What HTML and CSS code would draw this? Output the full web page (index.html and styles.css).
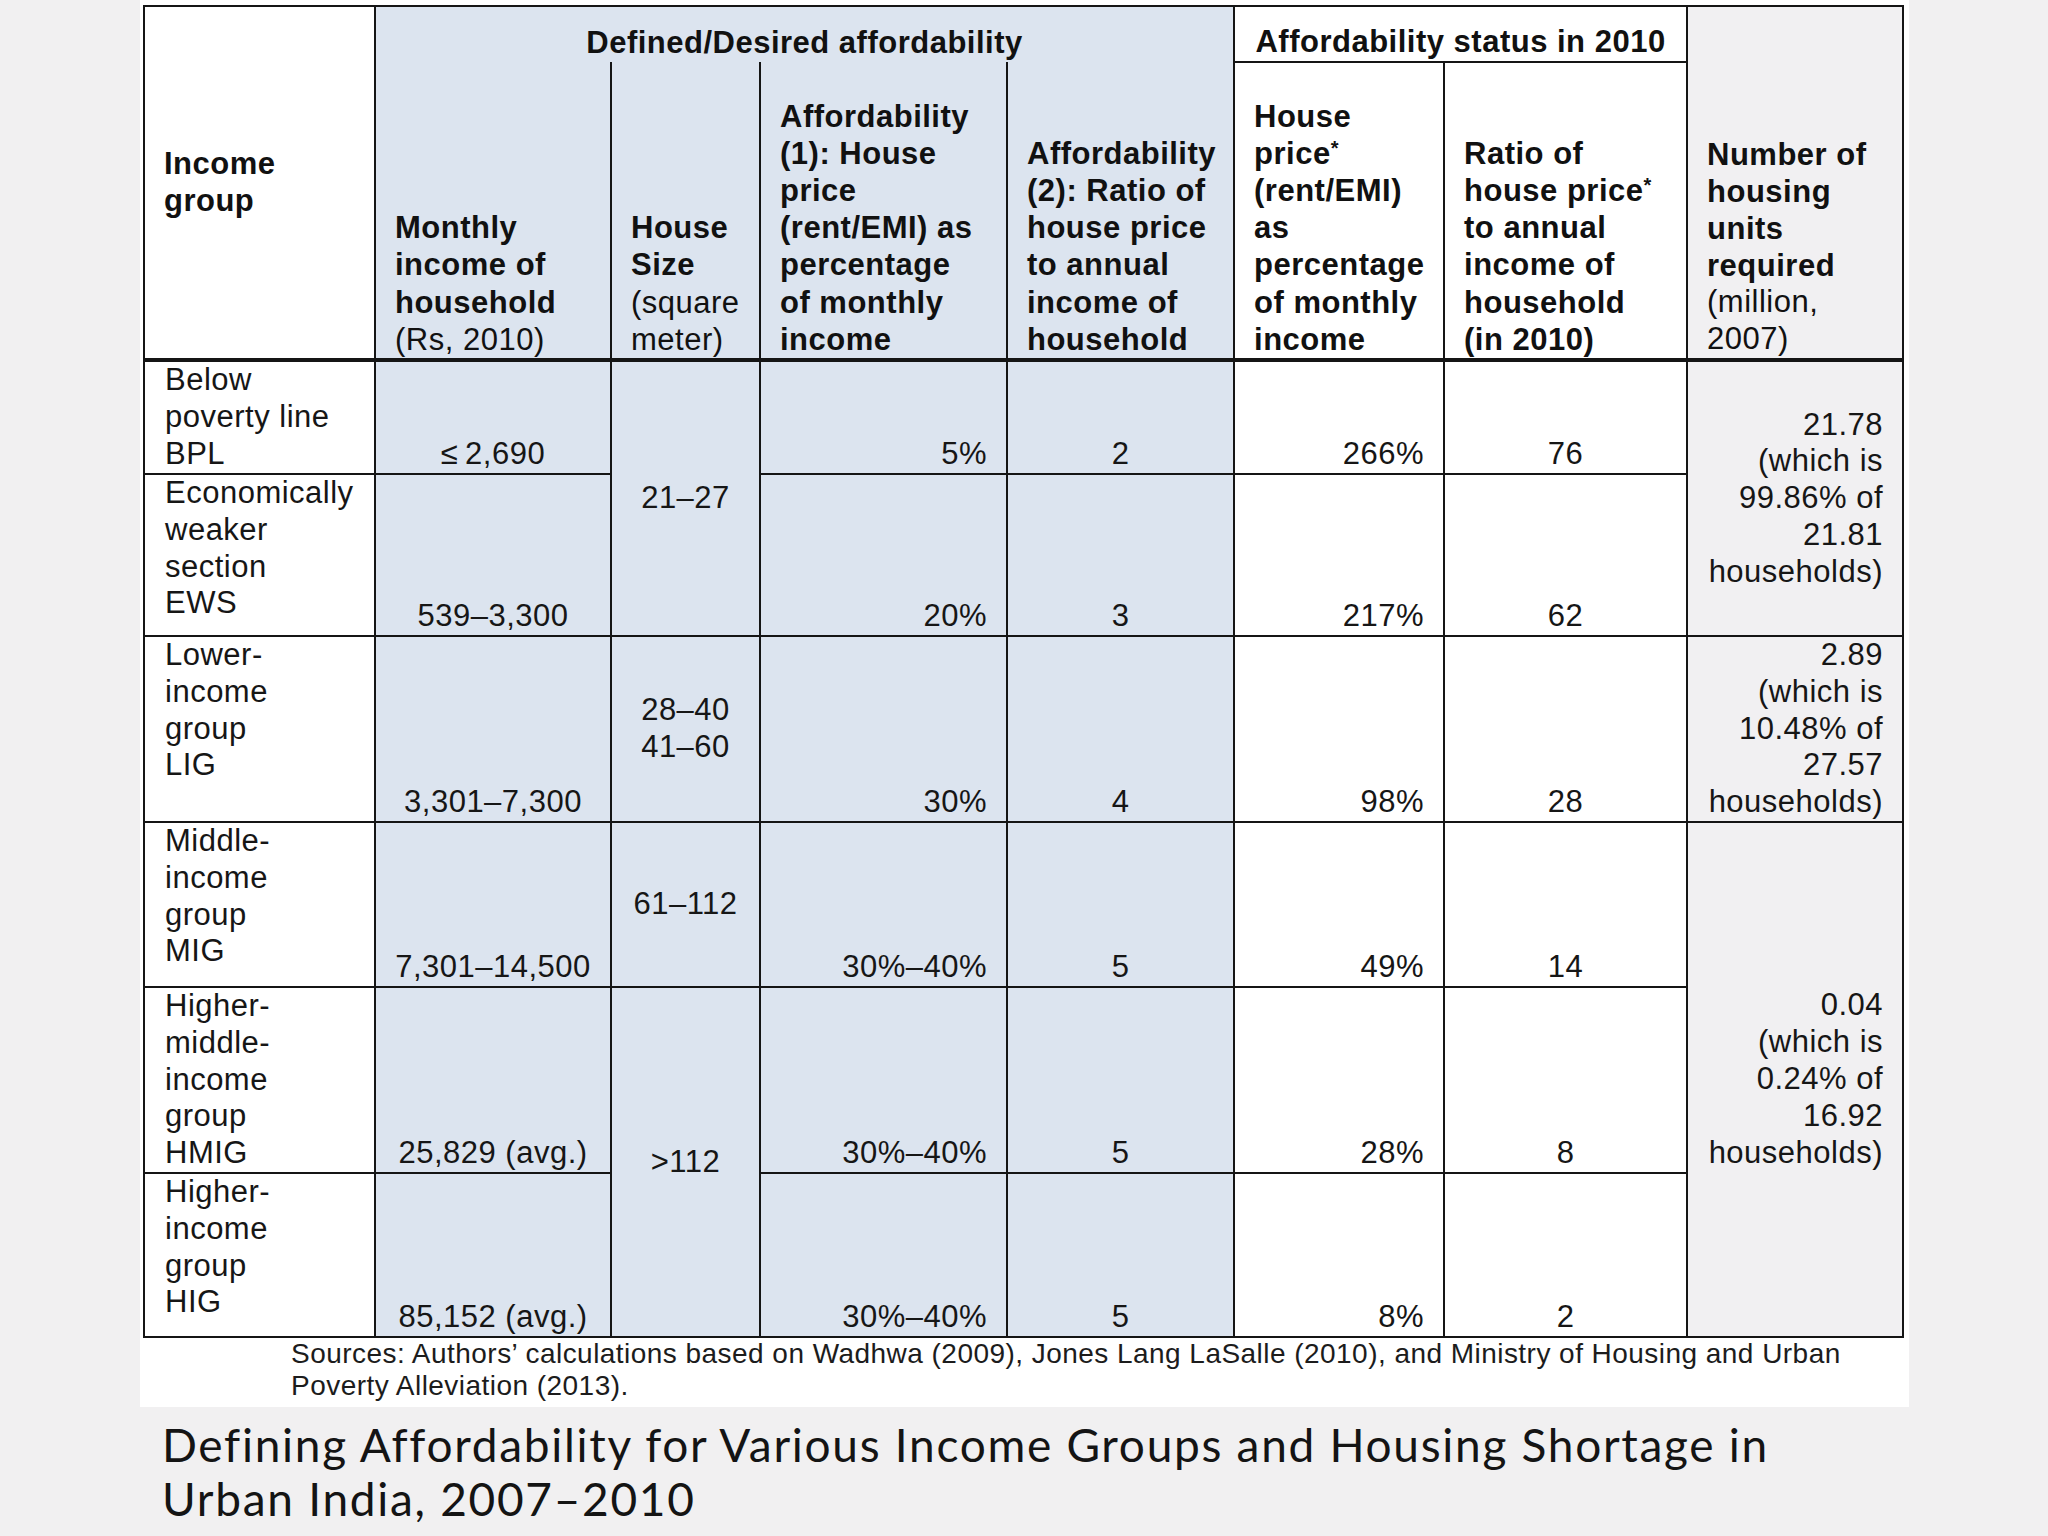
FILE: index.html
```html
<!DOCTYPE html>
<html lang="en">
<head>
    <meta charset="UTF-8">
    <title>Defining Affordability for Various Income Groups</title>
    <link rel="stylesheet" href="styles.css">
</head>
<body>
    <div class="slide">
        <div class="panel">
            <table class="afford">
                <colgroup>
                    <col class="c1"><col class="c2"><col class="c3"><col class="c4">
                    <col class="c5"><col class="c6"><col class="c7"><col class="c8">
                </colgroup>
                <thead>
                    <tr class="h1">
                        <th rowspan="2" class="group-head">Income<br>group</th>
                        <th colspan="4" class="blue center no-bottom">Defined/Desired affordability</th>
                        <th colspan="2" class="center">Affordability status in 2010</th>
                        <th rowspan="2" class="gray">Number of<br>housing<br>units<br>required<br><span class="light">(million,<br>2007)</span></th>
                    </tr>
                    <tr class="h2">
                        <th class="blue no-top">Monthly<br>income of<br>household<br><span class="light">(Rs, 2010)</span></th>
                        <th class="blue no-top">House<br>Size<br><span class="light">(square<br>meter)</span></th>
                        <th class="blue no-top">Affordability<br>(1): House<br>price<br>(rent/EMI) as<br>percentage<br>of monthly<br>income</th>
                        <th class="blue no-top">Affordability<br>(2): Ratio of<br>house price<br>to annual<br>income of<br>household</th>
                        <th>House<br>price<sup>*</sup><br>(rent/EMI)<br>as<br>percentage<br>of monthly<br>income</th>
                        <th>Ratio of<br>house price<sup>*</sup><br>to annual<br>income of<br>household<br>(in 2010)</th>
                    </tr>
                </thead>
                <tbody>
                    <tr class="r-bpl">
                        <td class="group">Below<br>poverty line<br>BPL</td>
                        <td class="blue center">&le;&#8201;2,690</td>
                        <td rowspan="2" class="blue center mid">21&ndash;27</td>
                        <td class="blue right">5%</td>
                        <td class="blue center">2</td>
                        <td class="right">266%</td>
                        <td class="center">76</td>
                        <td rowspan="2" class="gray right mid">21.78<br>(which is<br>99.86% of<br>21.81<br>households)</td>
                    </tr>
                    <tr class="r-ews">
                        <td class="group">Economically<br>weaker<br>section<br>EWS</td>
                        <td class="blue center">539&ndash;3,300</td>
                        <td class="blue right">20%</td>
                        <td class="blue center">3</td>
                        <td class="right">217%</td>
                        <td class="center">62</td>
                    </tr>
                    <tr class="r-lig">
                        <td class="group">Lower-<br>income<br>group<br>LIG</td>
                        <td class="blue center">3,301&ndash;7,300</td>
                        <td class="blue center mid">28&ndash;40<br>41&ndash;60</td>
                        <td class="blue right">30%</td>
                        <td class="blue center">4</td>
                        <td class="right">98%</td>
                        <td class="center">28</td>
                        <td class="gray right mid">2.89<br>(which is<br>10.48% of<br>27.57<br>households)</td>
                    </tr>
                    <tr class="r-mig">
                        <td class="group">Middle-<br>income<br>group<br>MIG</td>
                        <td class="blue center">7,301&ndash;14,500</td>
                        <td class="blue center mid">61&ndash;112</td>
                        <td class="blue right">30%&ndash;40%</td>
                        <td class="blue center">5</td>
                        <td class="right">49%</td>
                        <td class="center">14</td>
                        <td rowspan="3" class="gray right mid">0.04<br>(which is<br>0.24% of<br>16.92<br>households)</td>
                    </tr>
                    <tr class="r-hmig">
                        <td class="group">Higher-<br>middle-<br>income<br>group<br>HMIG</td>
                        <td class="blue center">25,829 (avg.)</td>
                        <td rowspan="2" class="blue center mid">&gt;112</td>
                        <td class="blue right">30%&ndash;40%</td>
                        <td class="blue center">5</td>
                        <td class="right">28%</td>
                        <td class="center">8</td>
                    </tr>
                    <tr class="r-hig">
                        <td class="group">Higher-<br>income<br>group<br>HIG</td>
                        <td class="blue center">85,152 (avg.)</td>
                        <td class="blue right">30%&ndash;40%</td>
                        <td class="blue center">5</td>
                        <td class="right">8%</td>
                        <td class="center">2</td>
                    </tr>
                </tbody>
            </table>
            <p class="sources">Sources: Authors&rsquo; calculations based on Wadhwa (2009), Jones Lang LaSalle (2010), and Ministry of Housing and Urban<br>Poverty Alleviation (2013).</p>
        </div>
        <h1 class="caption">Defining Affordability for Various Income Groups and Housing Shortage in<br>Urban India, 2007&ndash;2010</h1>
    </div>
</body>
</html>
```

FILE: styles.css
```css
* {
    margin: 0;
    padding: 0;
    box-sizing: border-box;
}

body {
    background: #f1f0f1;
    width: 2048px;
    height: 1536px;
    overflow: hidden;
}

.panel {
    width: 1769px;
    margin-left: 140px;
    background: #fff;
    padding: 5px 0 5px 3px;
}

/* table */

.afford {
    width: 1759px;
    table-layout: fixed;
    border-collapse: collapse;
    border: 2px solid #151515;
    font-family: "Liberation Sans", Arial, sans-serif;
    font-size: 31px;
    line-height: 36.8px;
    letter-spacing: 0.5px;
    color: #161616;
}

.c1 { width: 231px; }
.c2 { width: 236px; }
.c3 { width: 149px; }
.c4 { width: 247px; }
.c5 { width: 227px; }
.c6 { width: 210px; }
.c7 { width: 243px; }
.c8 { width: 216px; }

th, td {
    border: 2px solid #151515;
    padding: 0 19px 0 19px;
    white-space: nowrap;
    vertical-align: bottom;
    text-align: left;
}

th {
    font-weight: bold;
    color: #111;
}

thead tr.h2 th,
thead th.gray,
thead th.group-head {
    border-bottom-width: 4px;
}

.h1 { height: 56px; }
.h2 { height: 298px; }

.h2 th {
    line-height: 37.2px;
}

.group-head {
    vertical-align: middle;
}

.light {
    font-weight: normal;
}

sup {
    font-size: 20px;
    line-height: 0;
    vertical-align: 9px;
}

.no-bottom { border-bottom: none; }
.no-top { border-top: none; }

.blue { background: #dce4ef; }
.gray { background: #f1f0f2; }

.center { text-align: center; }
.right { text-align: right; }
.mid { vertical-align: middle; }

td.group {
    vertical-align: top;
    padding-left: 20px;
}

.r-bpl { height: 114px; }
.r-ews { height: 162px; }
.r-lig { height: 185px; }
.r-mig { height: 165px; }
.r-hmig { height: 186px; }
.r-hig { height: 164px; }

/* footer text */

.sources {
    font-family: "Liberation Sans", Arial, sans-serif;
    font-size: 28px;
    letter-spacing: 0.46px;
    line-height: 32px;
    color: #1c1c1c;
    padding-left: 148px;
    white-space: nowrap;
}

.caption {
    margin: 11px 0 0 162px;
    font-family: Lato, "Open Sans", sans-serif;
    font-weight: normal;
    font-size: 46px;
    line-height: 54px;
    letter-spacing: 1.7px;
    color: #141414;
    white-space: nowrap;
}
```
